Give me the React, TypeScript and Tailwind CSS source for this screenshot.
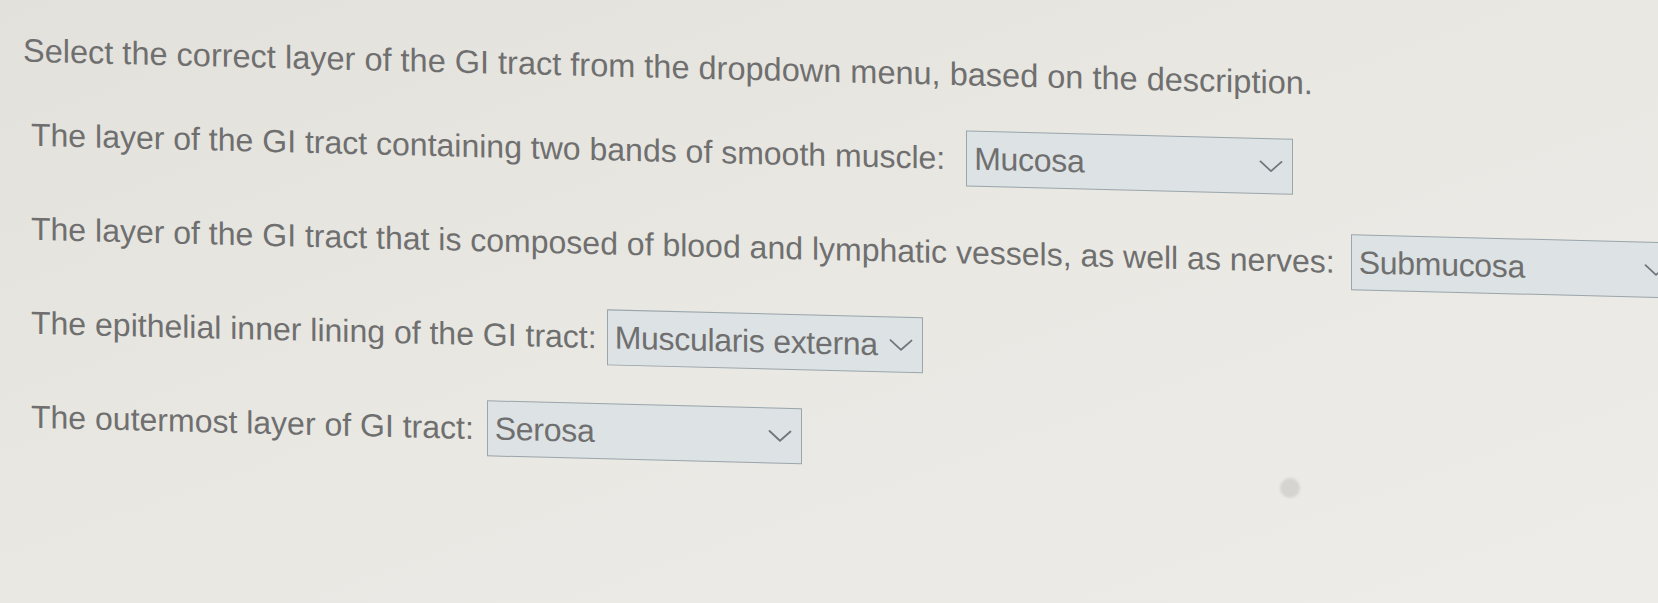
import React from "react";

type Row = {
  label: string;
  value: string;
  width: string;
  gap: string;
};

const rows: Row[] = [
  {
    label: "The layer of the GI tract containing two bands of smooth muscle:",
    value: "Mucosa",
    width: "w-[327px]",
    gap: "gap-[21px]",
  },
  {
    label:
      "The layer of the GI tract that is composed of blood and lymphatic vessels, as well as nerves:",
    value: "Submucosa",
    width: "w-[327px]",
    gap: "gap-[16px]",
  },
  {
    label: "The epithelial inner lining of the GI tract:",
    value: "Muscularis externa",
    width: "w-[316px]",
    gap: "gap-[10px]",
  },
  {
    label: "The outermost layer of GI tract:",
    value: "Serosa",
    width: "w-[315px]",
    gap: "gap-[13px]",
  },
];

function Chevron() {
  return (
    <svg
      width="24"
      height="13"
      viewBox="0 0 24 13"
      fill="none"
      className="shrink-0"
    >
      <path
        d="M1.5 1.5 L12 11 L22.5 1.5"
        stroke="#6f777c"
        strokeWidth="1.8"
        strokeLinecap="round"
        strokeLinejoin="round"
      />
    </svg>
  );
}

function SelectBox({ value, width }: { value: string; width: string }) {
  return (
    <div
      className={`${width} h-[56px] shrink-0 flex items-center justify-between border border-[#9ba6ab] bg-[#dde2e4] pl-[7px] pr-[9px]`}
    >
      <span className="leading-[40px] tracking-[-0.3px]">{value}</span>
      <Chevron />
    </div>
  );
}

export default function App() {
  return (
    <div
      className="relative h-[603px] w-full overflow-hidden bg-linear-to-br from-[#e3e1dc] via-[#e9e8e3] to-[#edece8] text-[#6f6f6f]"
      style={{ fontFamily: '"Liberation Sans", Arial, Helvetica, sans-serif' }}
    >
      <div className="origin-top-left skew-y-[1.45deg] whitespace-nowrap">
        <h1 className="pl-[23px] pt-[30px] text-[32.5px] leading-[40px] font-normal">
          Select the correct layer of the GI tract from the dropdown menu, based on the description.
        </h1>

        <div className="mt-[36px] flex flex-col gap-[38px] pl-[31px] text-[32px]">
          {rows.map((row) => (
            <div key={row.label} className={`flex items-center ${row.gap}`}>
              <span className="leading-[40px] shrink-0">{row.label}</span>
              <SelectBox value={row.value} width={row.width} />
            </div>
          ))}
        </div>
      </div>

      {/* smudge on the glass */}
      <div className="absolute left-[1280px] top-[478px] h-[20px] w-[20px] rounded-full bg-[#d5d4d1] blur-[1px]" />
    </div>
  );
}
